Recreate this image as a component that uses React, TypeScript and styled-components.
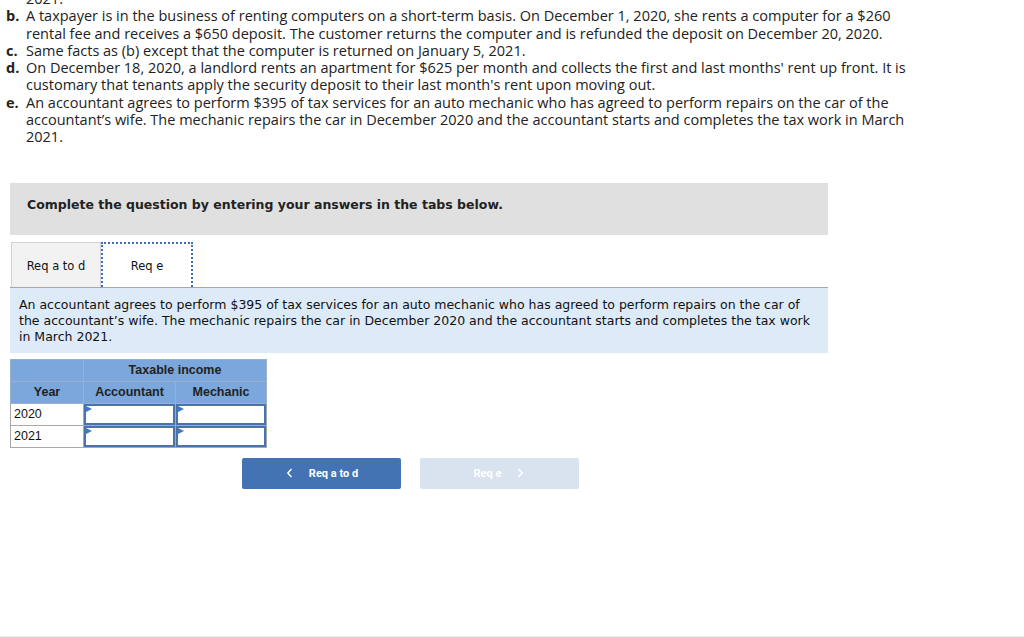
import styled, { createGlobalStyle } from "styled-components";

const GlobalStyle = createGlobalStyle`
  html, body {
    margin: 0;
    padding: 0;
    background: #ffffff;
  }
  body {
    font-family: "Open Sans", "Liberation Sans", sans-serif;
    color: #222;
    overflow: hidden;
  }
`;

const Page = styled.div`
  width: 1024px;
  height: 637px;
  box-sizing: border-box;
  border-bottom: 1px solid #ececec;
  overflow: hidden;
`;

const Facts = styled.ol`
  list-style: none;
  margin: -10px 0 0;
  padding: 0 0 0 6px;
  width: 900px;
`;

const Fact = styled.li`
  display: flex;
  font-size: 14.5px;
  line-height: 17.3px;
  color: #222;
`;

const Letter = styled.b`
  flex: 0 0 20px;
  font-weight: 700;
`;

const Body = styled.div`
  padding: 37px 0 0 10px;
  width: 818px;
`;

const Banner = styled.div`
  background: #e0e0e0;
  height: 52px;
  box-sizing: border-box;
  display: flex;
  align-items: center;
  padding: 0 0 8px 17px;
  font-family: "DejaVu Sans", Verdana, sans-serif;
  font-weight: 700;
  font-size: 12.5px;
  color: #222;
`;

const Tabs = styled.div`
  display: flex;
  margin-top: 7px;
  padding-left: 1px;
`;

const Tab = styled.div<{ $active?: boolean }>`
  width: ${(p) => (p.$active ? "92px" : "90px")};
  height: 45px;
  display: flex;
  align-items: center;
  justify-content: center;
  box-sizing: border-box;
  padding-top: 2px;
  font-family: "DejaVu Sans", Verdana, sans-serif;
  font-size: 11.5px;
  color: #111;
  background: ${(p) => (p.$active ? "#ffffff" : "#f2f2f2")};
  border: ${(p) => (p.$active ? "2px dotted #3d6fb8" : "1px solid #d2d2d2")};
  border-bottom: none;
`;

const Prompt = styled.div`
  background: #ddeaf7;
  border-top: 1px solid #a8a8a8;
  padding: 9px 12px 8px 9px;
  font-family: "DejaVu Sans", Verdana, sans-serif;
  font-size: 12.5px;
  line-height: 16px;
  color: #111;
`;

const Grid = styled.table`
  margin-top: 6px;
  border-collapse: collapse;
  font-family: "Liberation Sans", Arial, sans-serif;
  font-size: 12.5px;
  border: 1px solid #a8a8a8;
`;

const Head = styled.th<{ $w?: number }>`
  background: #7ba7dc;
  color: #222;
  font-weight: 700;
  height: 21px;
  padding: 0;
  width: ${(p) => (p.$w ? `${p.$w}px` : "auto")};
  border: 1px solid #9ab0cc;
  text-align: center;
`;

const YearCell = styled.td`
  height: 21px;
  padding: 0 0 0 3px;
  border: 1px solid #a8a8a8;
  color: #111;
`;

const InputCell = styled.td`
  padding: 0;
  border: 1px solid #a8a8a8;
  height: 21px;
`;

const Field = styled.div`
  position: relative;
  height: 17px;
  border: 2px solid #4a73ad;
  background: #fff;
  &::before {
    content: "";
    position: absolute;
    left: 0;
    top: 0;
    border-left: 6px solid #3f78c8;
    border-top: 3px solid transparent;
    border-bottom: 3px solid transparent;
  }
`;

const Nav = styled.div`
  display: flex;
  gap: 19px;
  margin: 10px 0 0 232px;
`;

const NavButton = styled.button<{ $disabled?: boolean }>`
  width: 159px;
  height: 31px;
  border: none;
  border-radius: 2px;
  background: ${(p) => (p.$disabled ? "#d9e3ef" : "#4473b3")};
  color: #ffffff;
  font-family: Roboto, "Liberation Sans", sans-serif;
  font-weight: 700;
  font-size: 11px;
  display: flex;
  align-items: center;
  justify-content: center;
  gap: 14px;
  padding: 0;
  cursor: pointer;
  svg {
    width: 10px;
    height: 10px;
  }
`;

const Chevron = ({ dir }: { dir: "left" | "right" }) => (
  <svg viewBox="0 0 10 10" fill="none" stroke="currentColor" strokeWidth="1.4">
    {dir === "left" ? <path d="M6.5 1 L2.8 5 L6.5 9" /> : <path d="M3.5 1 L7.2 5 L3.5 9" />}
  </svg>
);

const facts: [string, string][] = [
  ["", "2021."],
  [
    "b.",
    "A taxpayer is in the business of renting computers on a short-term basis. On December 1, 2020, she rents a computer for a $260 rental fee and receives a $650 deposit. The customer returns the computer and is refunded the deposit on December 20, 2020.",
  ],
  ["c.", "Same facts as (b) except that the computer is returned on January 5, 2021."],
  [
    "d.",
    "On December 18, 2020, a landlord rents an apartment for $625 per month and collects the first and last months' rent up front. It is customary that tenants apply the security deposit to their last month's rent upon moving out.",
  ],
  [
    "e.",
    "An accountant agrees to perform $395 of tax services for an auto mechanic who has agreed to perform repairs on the car of the accountant\u2019s wife. The mechanic repairs the car in December 2020 and the accountant starts and completes the tax work in March 2021.",
  ],
];

export default function App() {
  return (
    <>
      <GlobalStyle />
      <Page>
        <Facts>
          {facts.map(([l, t], i) => (
            <Fact key={i}>
              <Letter>{l}</Letter>
              <span>{t}</span>
            </Fact>
          ))}
        </Facts>
        <Body>
          <Banner>Complete the question by entering your answers in the tabs below.</Banner>
          <Tabs>
            <Tab>Req a to d</Tab>
            <Tab $active>Req e</Tab>
          </Tabs>
          <Prompt>
            An accountant agrees to perform $395 of tax services for an auto mechanic who has agreed to
            perform repairs on the car of the accountant&rsquo;s wife. The mechanic repairs the car in
            December 2020 and the accountant starts and completes the tax work in March 2021.
          </Prompt>
          <Grid>
            <thead>
              <tr>
                <Head $w={72}></Head>
                <Head colSpan={2}>Taxable income</Head>
              </tr>
              <tr>
                <Head>Year</Head>
                <Head $w={91}>Accountant</Head>
                <Head $w={90}>Mechanic</Head>
              </tr>
            </thead>
            <tbody>
              {["2020", "2021"].map((y) => (
                <tr key={y}>
                  <YearCell>{y}</YearCell>
                  <InputCell>
                    <Field />
                  </InputCell>
                  <InputCell>
                    <Field />
                  </InputCell>
                </tr>
              ))}
            </tbody>
          </Grid>
          <Nav>
            <NavButton>
              <Chevron dir="left" />
              Req a to d
            </NavButton>
            <NavButton $disabled>
              Req e
              <Chevron dir="right" />
            </NavButton>
          </Nav>
        </Body>
      </Page>
    </>
  );
}
